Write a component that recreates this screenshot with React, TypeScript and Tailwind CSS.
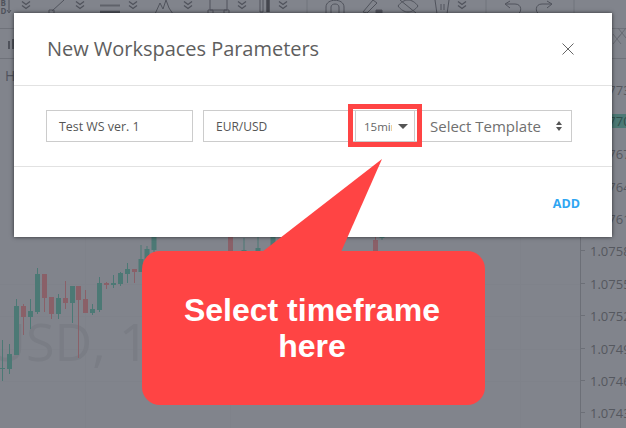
import React from 'react';

// x, wick top, wick bottom, body top, body bottom, up?
const candles: [number, number, number, number, number, boolean][] = [
  [2.5, 340, 381, 368, 369, true],
  [9.5, 344, 374, 354, 369, true],
  [16.5, 299, 355, 306, 355, true],
  [23.5, 304, 335, 306, 317, false],
  [30.5, 299, 329, 311, 317, true],
  [37.5, 268, 314, 274, 312, true],
  [44.5, 274, 312, 274, 298, false],
  [51.5, 297, 319, 297, 314, false],
  [58.5, 294, 319, 298, 314, true],
  [65.5, 281, 309, 298, 303, false],
  [72.5, 286, 323, 286, 303, true],
  [78.5, 286, 358, 286, 300, false],
  [85.5, 290, 313, 299, 313, false],
  [92.5, 304, 315, 309, 313, true],
  [99.5, 277, 312, 283, 310, true],
  [106.5, 282, 289, 283, 285, false],
  [113.5, 275, 288, 283, 285, true],
  [120.5, 272, 286, 273, 284, true],
  [127.5, 263, 283, 269, 274, true],
  [134.5, 269, 283, 269, 272, false],
  [141, 245, 272, 259, 272, true],
  [147, 246, 262, 249, 262, true],
  [154, 236, 252, 236, 250, true],
  [230.5, 236, 254, 236, 252, false],
  [244, 238, 254, 250, 254, true],
  [258, 236, 254, 248, 254, true],
  [273, 236, 254, 236, 252, true],
  [375.5, 236, 254, 240, 254, false],
  [382, 236, 240, 236, 238, true],
];

const prices = [
  ['1.0773', 90],
  ['1.0770', 121],
  ['1.0767', 154],
  ['1.0764', 187],
  ['1.0761', 219],
  ['1.0758', 251],
  ['1.0755', 284],
  ['1.0752', 316],
  ['1.0749', 349],
  ['1.0746', 381],
  ['1.0743', 413],
] as const;

const chevrons = [26, 80, 133, 188, 242, 283, 462];

const ChartBackdrop = () => (
  <svg className="absolute inset-0 font-['Open_Sans',sans-serif]" width="626" height="428" fill="none">
    {/* toolbar */}
    <g stroke="#50535c" strokeWidth="1">
      {chevrons.map((x) => (
        <path key={x} d={`M${x - 4} 1.5l4 3 4-3M${x - 4} 5.5l4 3 4-3`} strokeWidth="1.3" />
      ))}
      <path d="M52 11L64 0M49 10h5v6h-5z" />
      <path d="M100 5.5h20" stroke="#5f626a" strokeWidth="2" />
      <path d="M100 12h20" strokeWidth="2.5" />
      <path d="M155 14l5-11 3 6 3-9 3 8 4 6" />
      <path d="M210 0v10h17V0M208 10h5v4h-5zM224 10h5v4h-5z" />
      <path d="M260 0v12h3V0" />
      <path d="M268 0v12" stroke="#44464e" strokeWidth="3.5" />
      <path d="M326 14V7c0-9 18-9 18 0v7M331 14V7c0-4 8-4 8 0v7" />
      <path d="M363 12L373 0l4 3-10 10z" />
      <path d="M376 14v-4h6v4z" fill="#50535c" />
      <path d="M398 6c6-8 14-8 20 0-6 8-14 8-20 0zM400 0l16 13" />
      <path d="M435 0l2 14h10l2-14M441 4v6M444 4v6" />
      <path d="M510 1l-5 3 5 4M506 4h9c7 0 7 8 3 10" />
      <path d="M547 1l5 3-5 4M551 4h-9c-7 0-7 8-3 10" />
      <path d="M307 0v13M486 0v13M574 0v28" stroke="#71747c" />
    </g>
    <path d="M0 28.5h626M0 58.5h626" stroke="#6f727a" />
    <text x="0.5" y="6" fontSize="8" fontWeight="700" fill="#50535c">B</text>
    <text x="0.5" y="14" fontSize="8" fontWeight="700" fill="#50535c">D</text>
    <path d="M9 0v12M7 10l2 3 2-3" stroke="#50535c" />
    <path d="M9 41v8M13 39v10" stroke="#50535c" strokeWidth="2" />
    <text x="5" y="81" fontSize="14" fill="#50535c">H</text>
    <path d="M618 28l8 10M626 28l-8 10M613 34l8 10M621 34l-8 10" stroke="#696c74" />
    {/* grid */}
    <path d="M85.5 59v369M230.5 59v369M520.5 59v369M0 316.5h580M0 349.5h580M0 381.5h580M0 284.5h580" stroke="#7f828a" />
    <text x="-12" y="361" fontSize="52" fill="#7a7d85">USD, 1</text>
    {/* candles */}
    {candles.map(([x, wt, wb, bt, bb, up]) => (
      <g key={x} fill={up ? '#4c7975' : '#8a6068'}>
        <rect x={x - 0.5} y={wt} width="1" height={wb - wt} />
        <rect x={x - 2.5} y={bt} width="5" height={Math.max(bb - bt, 1)} />
      </g>
    ))}
    {/* price axis */}
    <path d="M580.5 59v369" stroke="#6c6f77" />
    <rect x="581" y="114" width="45" height="14" fill="#4c7975" />
    {prices.map(([label, y]) => (
      <g key={label}>
        <path d={`M580 ${y - 0.5}h5`} stroke="#6c6f77" />
        <text x="590" y={y + 5} fontSize="13" fill={label === '1.0770' ? '#2f4f4c' : '#55585f'}>{label}</text>
      </g>
    ))}
  </svg>
);

export default function App() {
  return (
    <div className="relative w-[626px] h-[428px] overflow-hidden bg-[#81848c] font-['Open_Sans',sans-serif]">
      <ChartBackdrop />

      {/* modal */}
      <div className="absolute left-[14px] top-[13px] w-[598px] h-[224px] bg-white shadow-[0_0_4px_rgba(0,0,0,0.65)]">
        <div className="h-[73px] border-b border-[#e2e2e2] flex items-center justify-between pl-[33px] pr-[38px]">
          <h2 className="text-[20px] text-[#5e5e5e] leading-none tracking-[-0.03px]">New Workspaces Parameters</h2>
          <svg width="12" height="12" viewBox="0 0 12 12" fill="none" stroke="#666">
            <path d="M0.5 0.5l11 11M11.5 0.5l-11 11" />
          </svg>
        </div>

        <div className="h-[81px] border-b border-[#e2e2e2] pl-[32px] pt-[24px] flex items-start text-[12px] text-[#555]">
          <div className="w-[147px] h-[32px] border border-[#ccc] flex items-center pl-[12px] pt-[2px] text-[12.4px]">Test WS ver. 1</div>
          <div className="w-[152px] h-[32px] ml-[10px] border-y border-l border-[#ccc] flex items-center pl-[12px] pt-[2px]">EUR/USD</div>

          <div className="relative w-[60px] h-[32px] border border-[#ccc] flex items-center pl-[8px] pt-[1px] text-[11.5px] text-[#666]">
            <span className="w-[28px] overflow-hidden whitespace-nowrap">15min</span>
            <svg className="ml-[6px]" width="10" height="5" viewBox="0 0 10 5" fill="#555">
              <path d="M0 0h10L5 5z" />
            </svg>
            <div className="absolute left-[-8px] right-[-8px] top-[-7px] bottom-[-6px] border-[5px] border-[#ff4444]" />
          </div>

          <div className="w-[157px] h-[32px] border-y border-r border-[#ccc] flex items-center justify-between pl-[15px] pr-[9px] text-[15px] text-[#707070]">
            <span>Select Template</span>
            <svg width="6" height="10" viewBox="0 0 6 10" fill="#555">
              <path d="M3 0l3 4H0zM3 10L0 6h6z" />
            </svg>
          </div>
        </div>

        <div className="flex justify-end pt-[31px] pr-[32px]">
          <span className="text-[12.5px] font-bold text-[#2fa6f2] leading-none">ADD</span>
        </div>
      </div>

      {/* callout */}
      <svg className="absolute left-[262px] top-[159px]" width="121" height="94" viewBox="0 0 121 94" fill="#ff4444">
        <path d="M120 0L0 93h79z" />
      </svg>
      <div className="absolute left-[142px] top-[251px] w-[343px] h-[154px] rounded-[18px] bg-[#ff4444] pt-[41px] pr-[3px] text-center text-[32px] leading-[36px] font-bold text-white font-['Liberation_Sans',sans-serif]">
        Select timeframe
        <br />
        here
      </div>
    </div>
  );
}
